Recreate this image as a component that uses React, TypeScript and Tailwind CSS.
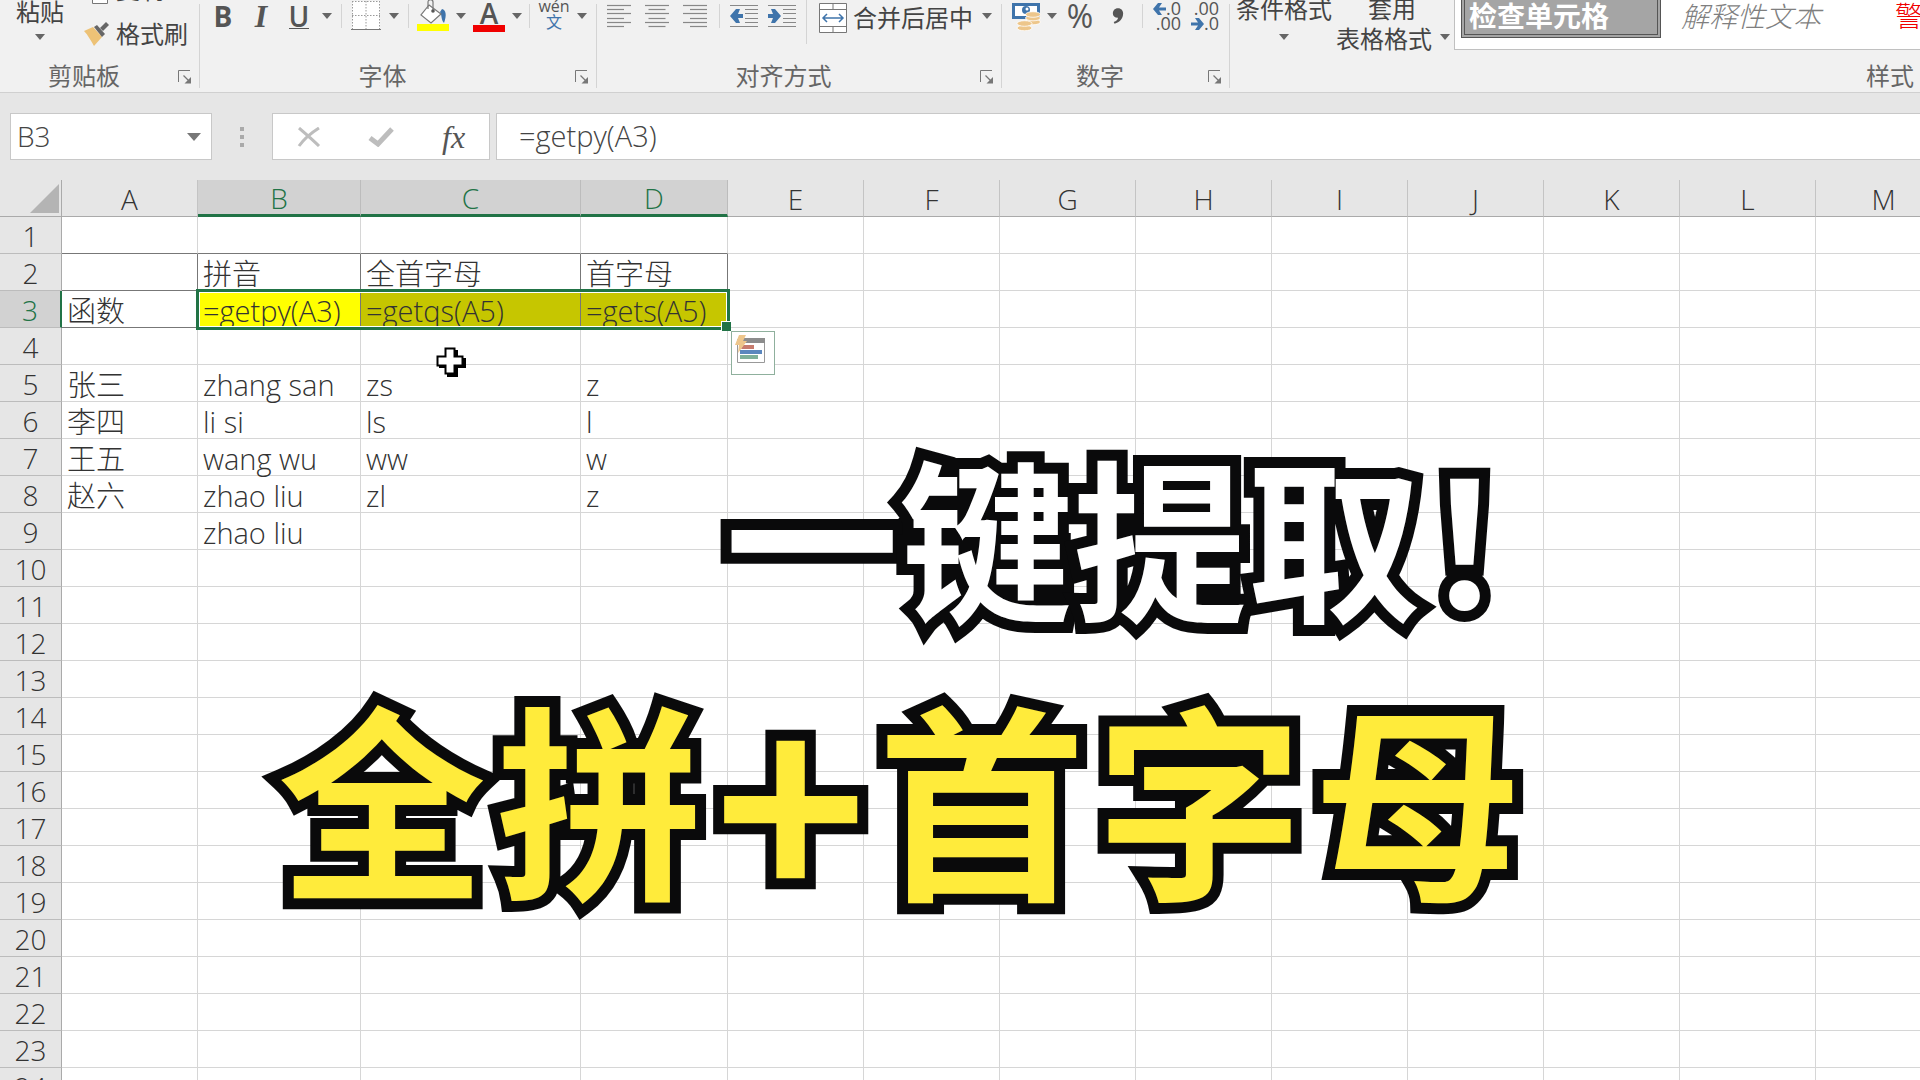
import { useState, type ReactNode } from "react";
import clsx from "clsx";

interface Column {
  name: string;
  width: string;
}

const columns: Column[] = [
  { name: "A", width: "w-[136px]" },
  { name: "B", width: "w-[163px]" },
  { name: "C", width: "w-[220px]" },
  { name: "D", width: "w-[147px]" },
  { name: "E", width: "w-[136px]" },
  { name: "F", width: "w-[136px]" },
  { name: "G", width: "w-[136px]" },
  { name: "H", width: "w-[136px]" },
  { name: "I", width: "w-[136px]" },
  { name: "J", width: "w-[136px]" },
  { name: "K", width: "w-[136px]" },
  { name: "L", width: "w-[136px]" },
  { name: "M", width: "w-[136px]" },
];

const cells: Record<string, string> = {
  B2: "拼音",
  C2: "全首字母",
  D2: "首字母",
  A3: "函数",
  B3: "=getpy(A3)",
  C3: "=getqs(A5)",
  D3: "=gets(A5)",
  A5: "张三",
  B5: "zhang san",
  C5: "zs",
  D5: "z",
  A6: "李四",
  B6: "li si",
  C6: "ls",
  D6: "l",
  A7: "王五",
  B7: "wang wu",
  C7: "ww",
  D7: "w",
  A8: "赵六",
  B8: "zhao liu",
  C8: "zl",
  D8: "z",
  B9: "zhao liu",
};

const selected = ["B", "C", "D"];
const rows = Array.from({ length: 24 }, (_, i) => i + 1);

function Caret() {
  return (
    <svg width="10" height="6" viewBox="0 0 10 6" className="shrink-0">
      <path d="M0 0h10L5 6z" fill="#666" />
    </svg>
  );
}

function CaretButton({ label }: { label: string }) {
  return (
    <button aria-label={label} className="flex h-8 w-4 shrink-0 items-center justify-center">
      <Caret />
    </button>
  );
}

function IconButton({ label, children }: { label: string; children: ReactNode }) {
  return (
    <button aria-label={label} className="flex h-8 w-8 shrink-0 items-center justify-center">
      {children}
    </button>
  );
}

function Divider({ className }: { className?: string }) {
  return <span className={clsx("w-px shrink-0 bg-[#d4d4d4]", className ?? "h-6")} />;
}

function Launcher({ label }: { label: string }) {
  return (
    <button aria-label={label} className="absolute right-2 bottom-2">
      <svg width="14" height="14" viewBox="0 0 14 14" fill="none" stroke="#777">
        <path d="M.5 12V.5H12" />
        <path d="M5.500 5.500l5 5" strokeWidth="1.300" />
        <path d="M13 7v6.500H6.500z" fill="#777" stroke="none" />
      </svg>
    </button>
  );
}

function RibbonGroup({
  title,
  className,
  children,
}: {
  title: string;
  className: string;
  children: ReactNode;
}) {
  return (
    <section className={clsx("relative flex h-full flex-col justify-end", className)}>
      {children}
      <div className="flex h-8 shrink-0 items-center justify-center pr-8 text-2xl text-[#666]">{title}</div>
      <Launcher label={`${title}设置`} />
      <span className="absolute right-0 bottom-1 h-[84px] w-px bg-[#d4d4d4]" />
    </section>
  );
}

function AlignIcon({ kind }: { kind: "left" | "center" | "right" }) {
  return (
    <svg width="26" height="24" viewBox="0 0 26 24" stroke="#888" strokeWidth="1.200">
      {[1, 5, 9, 14, 18, 22].map((y, i) => {
        const width = i % 2 === 0 ? 24 : 17;
        const x = kind === "left" ? 1 : kind === "right" ? 25 - width : 13 - width / 2;
        return <path key={y} d={`M${x} ${y}.500h${width}`} />;
      })}
    </svg>
  );
}

function IndentIcon({ increase }: { increase?: boolean }) {
  return (
    <svg width="29" height="24" viewBox="0 0 29 24">
      <g stroke="#888" strokeWidth="1.200">
        <path d="M0 1.500h28M15 5.500h13M15 9.500h13M15 14.500h13M15 18.500h13M0 22.500h28" />
      </g>
      <path
        d={increase ? "M0 10h5L3 5h4l6 7-6 7H3l2-5H0z" : "M13 10H8l2-5H6L0 12l6 7h4l-2-5h5z"}
        fill="#3f74ab"
      />
    </svg>
  );
}

function MergeIcon() {
  return (
    <svg width="28" height="30" viewBox="0 0 28 30" fill="#fff" stroke="#777">
      <path d="M.5.5h27v29H.5zM.5 6.500h27M.5 23.500h27M14 .5v6M14 23.500v6" />
      <path d="M4 15h20M8 11l-4 4 4 4M20 11l4 4-4 4" fill="none" stroke="#3f74ab" strokeWidth="1.500" />
    </svg>
  );
}

function BucketIcon() {
  return (
    <svg width="32" height="32" viewBox="0 0 32 32" fill="none">
      <path d="M25 9c4 1 5 6 2 14-3-3-2-8-4-11z" fill="#3f74ab" />
      <path d="M12 5l12 9-10 9-10-8z" fill="#fff" stroke="#777" strokeWidth="1.200" />
      <path d="M11 9V2c0-3 5-3 5 0v8" stroke="#777" strokeWidth="1.200" />
      <circle cx="16" cy="11" r="1.800" fill="#555" />
      <path d="M0 24h32v7H0z" fill="#ff0" />
    </svg>
  );
}

function MoneyIcon() {
  return (
    <svg width="29" height="29" viewBox="0 0 29 29">
      <path d="M0 1h28v16H0z" fill="#3f74ab" />
      <path d="M3 4h22v10H3z" fill="#fff" />
      <path d="M0 1h5L0 6zM28 1h-5l5 5zM0 17h5l-5-5z" fill="#3f74ab" />
      <circle cx="14" cy="8" r="4" fill="#3f74ab" />
      <circle cx="15" cy="7" r="1.500" fill="#fff" />
      <g fill="#edc68b" stroke="#fff" strokeWidth=".8">
        <ellipse cx="21" cy="20" rx="7.500" ry="2.800" />
        <ellipse cx="21" cy="16" rx="7.500" ry="2.800" />
        <ellipse cx="21" cy="12.500" rx="7.500" ry="2.800" />
        <ellipse cx="12.500" cy="26" rx="7.500" ry="2.800" />
        <ellipse cx="12.500" cy="21.500" rx="7.500" ry="2.800" />
      </g>
    </svg>
  );
}

function SmallArrow({ flip }: { flip?: boolean }) {
  return (
    <svg width="13" height="12" viewBox="0 0 13 12" fill="#3f74ab">
      <path d={flip ? "M0 4.500h7L4 0h4l5 6-5 6H4l3-4.500H0z" : "M13 4.500H6L9 0H5L0 6l5 6h4L6 7.500h7z"} />
    </svg>
  );
}

function ClipboardGroup() {
  return (
    <RibbonGroup title="剪贴板" className="w-[200px]">
      <div className="flex shrink-0 items-end justify-between pr-3 pb-3 pl-4 text-2xl leading-7 text-[#444]">
        <button className="mb-2 flex flex-col items-center gap-2">
          粘贴
          <Caret />
        </button>
        <div className="flex flex-col gap-4">
          <button className="flex items-center gap-1.5">
            <svg width="26" height="28" viewBox="0 0 26 28" fill="#fff" stroke="#777">
              <path d="M8.500 6.500h15v21h-15z" />
            </svg>
            复制
          </button>
          <button className="flex items-center gap-1.5">
            <svg width="26" height="24" viewBox="0 0 26 24">
              <path d="M0 9l9-4 9 10-8 9C7 19 4 13 0 9z" fill="#edc276" />
              <path d="M10 5l3-2 8 9-3 3z" fill="#666" />
              <path d="M16 6l6-6 3 3-6 6z" fill="#666" />
            </svg>
            格式刷
          </button>
        </div>
      </div>
    </RibbonGroup>
  );
}

function FontGroup() {
  return (
    <RibbonGroup title="字体" className="w-[397px]">
      <div className="mb-7 flex h-8 shrink-0 items-center pl-[7px] text-[#555]">
        <div className="flex gap-1.5 text-[28px] leading-8 font-bold">
          <IconButton label="加粗">B</IconButton>
          <IconButton label="倾斜">
            <span className="font-['Liberation_Serif',serif] text-[32px] italic">I</span>
          </IconButton>
          <IconButton label="下划线">
            <span className="border-b border-[#555] leading-6 font-semibold">U</span>
          </IconButton>
        </div>
        <div className="ml-1 flex items-center">
          <CaretButton label="下划线选项" />
        </div>
        <span className="ml-1.5 flex">
          <Divider />
        </span>
        <div className="ml-2 flex gap-1">
          <IconButton label="边框">
            <svg width="30" height="32" viewBox="0 0 30 32" fill="none" stroke="#999">
              <path d="M1 1h28v28H1z" fill="#fff" stroke="none" />
              <path d="M1.500 1v28M28.500 1v28M15 1v28M1 1.500h28M1 15.500h28" strokeDasharray="1.500 1.500" />
              <path d="M0 29.500h30" stroke="#777" />
            </svg>
          </IconButton>
          <CaretButton label="边框选项" />
        </div>
        <span className="ml-1.5 flex">
          <Divider />
        </span>
        <div className="ml-2 flex gap-1">
          <IconButton label="填充颜色">
            <BucketIcon />
          </IconButton>
          <CaretButton label="填充颜色选项" />
        </div>
        <div className="ml-1 flex gap-1">
          <IconButton label="字体颜色">
            <span className="w-full border-b-7 border-[#f00000] text-[28px] leading-6 font-semibold">A</span>
          </IconButton>
          <CaretButton label="字体颜色选项" />
        </div>
        <span className="ml-1 flex">
          <Divider />
        </span>
        <div className="ml-2 flex gap-1">
          <IconButton label="拼音指南">
            <span className="flex flex-col items-center text-base">
              <span className="leading-3">wén</span>
              <span className="leading-5 text-[#3f74ab]">文</span>
            </span>
          </IconButton>
          <CaretButton label="拼音指南选项" />
        </div>
      </div>
    </RibbonGroup>
  );
}

function AlignmentGroup() {
  return (
    <RibbonGroup title="对齐方式" className="w-[405px]">
      <div className="mb-4 flex h-11 shrink-0 items-start pl-[6px]">
        <div className="flex gap-1.5">
          <IconButton label="左对齐">
            <AlignIcon kind="left" />
          </IconButton>
          <IconButton label="居中">
            <AlignIcon kind="center" />
          </IconButton>
          <IconButton label="右对齐">
            <AlignIcon kind="right" />
          </IconButton>
        </div>
        <span className="mt-1 ml-2 flex">
          <Divider />
        </span>
        <div className="ml-2 flex gap-1.5">
          <IconButton label="减少缩进量">
            <IndentIcon />
          </IconButton>
          <IconButton label="增加缩进量">
            <IndentIcon increase />
          </IconButton>
        </div>
        <span className="ml-2 flex">
          <Divider className="h-11" />
        </span>
        <button className="ml-3 flex h-9 shrink-0 items-center gap-1.5 text-2xl whitespace-nowrap text-[#444]">
          <MergeIcon />
          合并后居中
        </button>
        <span className="ml-1.5 flex">
          <CaretButton label="合并选项" />
        </span>
      </div>
    </RibbonGroup>
  );
}

function NumberGroup() {
  return (
    <RibbonGroup title="数字" className="w-[228px]">
      <div className="mb-7 flex h-8 shrink-0 items-center pl-2 text-[#555]">
        <IconButton label="会计数字格式">
          <MoneyIcon />
        </IconButton>
        <span className="ml-0.5 flex">
          <CaretButton label="会计格式选项" />
        </span>
        <div className="ml-1 flex gap-1.5">
          <IconButton label="百分比样式">
            <span className="text-[32px] leading-8">%</span>
          </IconButton>
          <IconButton label="千位分隔样式">
            <svg width="12" height="20" viewBox="0 0 14 20" fill="#555">
              <path d="M7 1c4 0 6 3 6 6 0 6-4 10-10 12l-1-2c3-1 5-3 5-5-4 0-6-2-6-5s2-6 6-6z" />
            </svg>
          </IconButton>
        </div>
        <span className="ml-2 flex">
          <Divider />
        </span>
        <div className="ml-2 flex gap-1.5 text-lg leading-[15px]">
          <IconButton label="增加小数位数">
            <span className="flex flex-col items-end">
              <span className="flex items-center">
                <SmallArrow />
                .0
              </span>
              .00
            </span>
          </IconButton>
          <IconButton label="减少小数位数">
            <span className="flex flex-col items-end">
              .00
              <span className="flex items-center">
                <SmallArrow flip />
                .0
              </span>
            </span>
          </IconButton>
        </div>
      </div>
    </RibbonGroup>
  );
}

function StylesGroup() {
  return (
    <section className="flex h-full min-w-0 flex-1 flex-col justify-end">
      <div className="flex shrink-0 items-end pl-1.5 text-2xl leading-[30px] whitespace-nowrap text-[#444]">
        <button className="mb-3.5 flex shrink-0 flex-col items-center gap-2.5">
          条件格式
          <Caret />
        </button>
        <button className="ml-1 flex shrink-0 items-end gap-2">
          <span>
            <span className="block pl-4">套用</span>
            表格格式
          </span>
          <span className="mb-3.5 flex">
            <Caret />
          </span>
        </button>
        <div className="mb-1 ml-1 flex h-[52px] min-w-0 flex-1 items-start overflow-hidden border-b border-l border-[#c0c0c0] bg-white pl-1.5 text-[28px] leading-7">
          <button className="h-10 w-[200px] shrink-0 border-4 border-t-0 border-double border-[#555] bg-[#a5a5a5] pl-1 text-left font-bold text-white">
            检查单元格
          </button>
          <button className="mt-1 ml-5 shrink-0 font-light text-[#7f7f7f] italic">解释性文本</button>
          <button className="mt-1 ml-[74px] shrink-0 font-light text-[#f00000]">警告文本</button>
        </div>
      </div>
      <div className="flex h-[38px] shrink-0 items-end justify-end pr-1.5 text-2xl leading-8 text-[#666]">样式</div>
    </section>
  );
}

function FormulaBar() {
  const [formula, setFormula] = useState(cells.B3);

  return (
    <div className="flex h-[87px] shrink-0 items-start pt-5 pl-2.5 text-[#444]">
      <div className="flex h-[47px] w-[202px] shrink-0 items-center border border-[#c8c8c8] bg-white pr-2.5">
        <input
          aria-label="名称框"
          defaultValue="B3"
          className="h-full w-full min-w-0 bg-transparent pb-0.5 pl-1.5 text-[28px] leading-9 font-light outline-none"
        />
        <button aria-label="名称列表">
          <svg width="14" height="8" viewBox="0 0 14 8">
            <path d="M0 0h14L7 8z" fill="#777" />
          </svg>
        </button>
      </div>
      <div className="flex h-[47px] w-[60px] shrink-0 flex-col items-center justify-center gap-1">
        <span className="h-1 w-1 bg-[#aaa]" />
        <span className="h-1 w-1 bg-[#aaa]" />
        <span className="h-1 w-1 bg-[#aaa]" />
      </div>
      <div className="flex h-[47px] w-[218px] shrink-0 items-center justify-around border border-[#c8c8c8] bg-white">
        <button aria-label="取消">
          <svg width="24" height="20" viewBox="0 0 24 20" fill="none" stroke="#bdbdbd" strokeWidth="3">
            <path d="M2 1c7 6 14 12 20 18M22 1C14 6 7 12 2 19" />
          </svg>
        </button>
        <button aria-label="输入">
          <svg width="26" height="20" viewBox="0 0 26 20" fill="none" stroke="#bdbdbd" strokeWidth="5">
            <path d="M2 11l8 6L24 2" />
          </svg>
        </button>
        <button
          aria-label="插入函数"
          className="font-['Liberation_Serif',serif] text-[32px] leading-9 text-[#555] italic"
        >
          fx
        </button>
      </div>
      <input
        aria-label="编辑栏"
        value={formula}
        onChange={(e) => setFormula(e.target.value)}
        className="ml-1.5 h-[47px] min-w-0 flex-1 border border-r-0 border-[#c8c8c8] bg-white pb-0.5 pl-[22px] text-[29px] leading-9 font-light outline-none"
      />
    </div>
  );
}

function cellClass(col: string, row: number) {
  const bordered = ["A", "B", "C", "D"].includes(col) && row >= 1 && row <= 3;
  return clsx(
    "relative h-[37px] border-r border-b p-0 pl-[5px] text-left",
    bordered ? "border-b-[#777]" : "border-b-[#d6d6d6]",
    bordered && row > 1 ? "border-r-[#777]" : "border-r-[#d6d6d6]",
    row === 3 && col === "B" && "bg-[#ffff00]",
    row === 3 && (col === "C" || col === "D") && "bg-[#c6c600]"
  );
}

// Frame round B3:D3, with the fill handle and the quick analysis button
function Selection() {
  return (
    <div className="absolute -top-0.5 -left-0.5 z-10 h-[41px] w-[534px] border-3 border-[#217346]">
      <div className="h-full border border-white" />
      <span className="absolute -right-1 -bottom-1 h-2.5 w-2.5 border-t border-l border-white bg-[#217346]" />
      <button
        aria-label="快速分析"
        className="absolute top-[39px] left-[532px] flex h-11 w-11 items-center justify-center border border-[#8fb09d] bg-white pr-1.5 pb-2"
      >
        <svg width="30" height="29" viewBox="0 0 30 29">
          <path d="M2.500 4.500h27v23h-27z" fill="#fff" stroke="#999" />
          <path d="M9 3h21v5H7z" fill="#8c8c8c" />
          <path d="M8 10h11v4H6z" fill="#c77b6d" />
          <path d="M5 15h22v4H5z" fill="#5b87be" />
          <path d="M5 20h18v4H5z" fill="#7fb09a" />
          <path d="M4 0h7L8 6h4L3 18l1-8H0z" fill="#edc68b" />
        </svg>
      </button>
    </div>
  );
}

function CellCursor() {
  return (
    <svg width="31" height="31" viewBox="0 0 31 31" className="absolute top-[167px] left-[436px] z-20">
      <path d="M11 3h11v8h8v10h-8v9H11v-9H3V11h8z" fill="#000" />
      <path d="M9.500 1.500h9v8h8v9h-8v8h-9v-8h-8v-9h8z" fill="#fff" stroke="#000" strokeWidth="2" />
    </svg>
  );
}

function Sheet() {
  return (
    <div className="relative min-h-0 flex-1 overflow-hidden bg-white">
      <table className="w-[1966px] table-fixed border-separate border-spacing-0 text-[28px] font-light text-[#333]">
        <colgroup>
          <col className="w-[62px]" />
          {columns.map((col) => (
            <col key={col.name} className={col.width} />
          ))}
          <col />
        </colgroup>
        <thead>
          <tr>
            <th className="h-[37px] border-r border-b border-[#aaa] bg-[#e6e6e6] p-0">
              <svg width="29" height="29" viewBox="0 0 29 29" className="mr-0.5 ml-auto">
                <path d="M29 0v29H0z" fill="#b4b4b4" />
              </svg>
            </th>
            {columns.map((col) => (
              <th
                key={col.name}
                scope="col"
                className={clsx(
                  "h-[37px] border-r p-0 pt-0.5 font-light",
                  selected.includes(col.name)
                    ? "border-b-3 border-r-[#bcbcbc] border-b-[#217346] bg-[#d2d2d2] leading-8 text-[#217346]"
                    : "border-b border-r-[#c4c4c4] border-b-[#aaa] bg-[#e6e6e6] leading-[34px]"
                )}
              >
                {col.name}
              </th>
            ))}
            <th className="bg-[#e6e6e6]" />
          </tr>
        </thead>
        <tbody>
          {rows.map((row) => (
            <tr key={row}>
              <th
                scope="row"
                className={clsx(
                  "h-[37px] border-b border-b-[#bcbcbc] p-0 pt-0.5 leading-[34px] font-light",
                  row === 3
                    ? "border-r-2 border-r-[#217346] bg-[#d2d2d2] text-[#217346]"
                    : "border-r border-r-[#aaa] bg-[#e6e6e6]"
                )}
              >
                {row}
              </th>
              {columns.map((col) => (
                <td key={col.name} className={cellClass(col.name, row)}>
                  <span className="block h-9 text-[29px] leading-10 whitespace-nowrap">
                    {cells[`${col.name}${row}`]}
                  </span>
                  {row === 3 && col.name === "B" && <Selection />}
                </td>
              ))}
              <td />
            </tr>
          ))}
        </tbody>
      </table>
      <CellCursor />
    </div>
  );
}

function Caption() {
  return (
    <div className="pointer-events-none absolute top-[446px] left-[278px] z-30 font-['Noto_Sans_CJK_SC',sans-serif] font-bold whitespace-nowrap [paint-order:stroke_fill] [-webkit-text-stroke:22px_#0a0a0b]">
      <p className="pl-[447px] text-[174px] leading-[174px] text-white">一键提取！</p>
      <p className="mt-[70px] flex items-center gap-2.5 text-[208px] leading-[208px] text-[#ffeb3b]">
        <span>全</span>
        <span>拼</span>
        <span className="text-[260px]">+</span>
        <span>首</span>
        <span>字</span>
        <span>母</span>
      </p>
    </div>
  );
}

export default function App() {
  return (
    <div className="relative flex h-screen flex-col overflow-hidden bg-[#e6e6e6] font-['Open_Sans','Noto_Sans_CJK_SC',sans-serif]">
      <header className="flex h-[93px] shrink-0 overflow-hidden border-b border-[#d0d0d0] bg-[#f1f1f1]">
        <ClipboardGroup />
        <FontGroup />
        <AlignmentGroup />
        <NumberGroup />
        <StylesGroup />
      </header>
      <FormulaBar />
      <Sheet />
      <Caption />
    </div>
  );
}
